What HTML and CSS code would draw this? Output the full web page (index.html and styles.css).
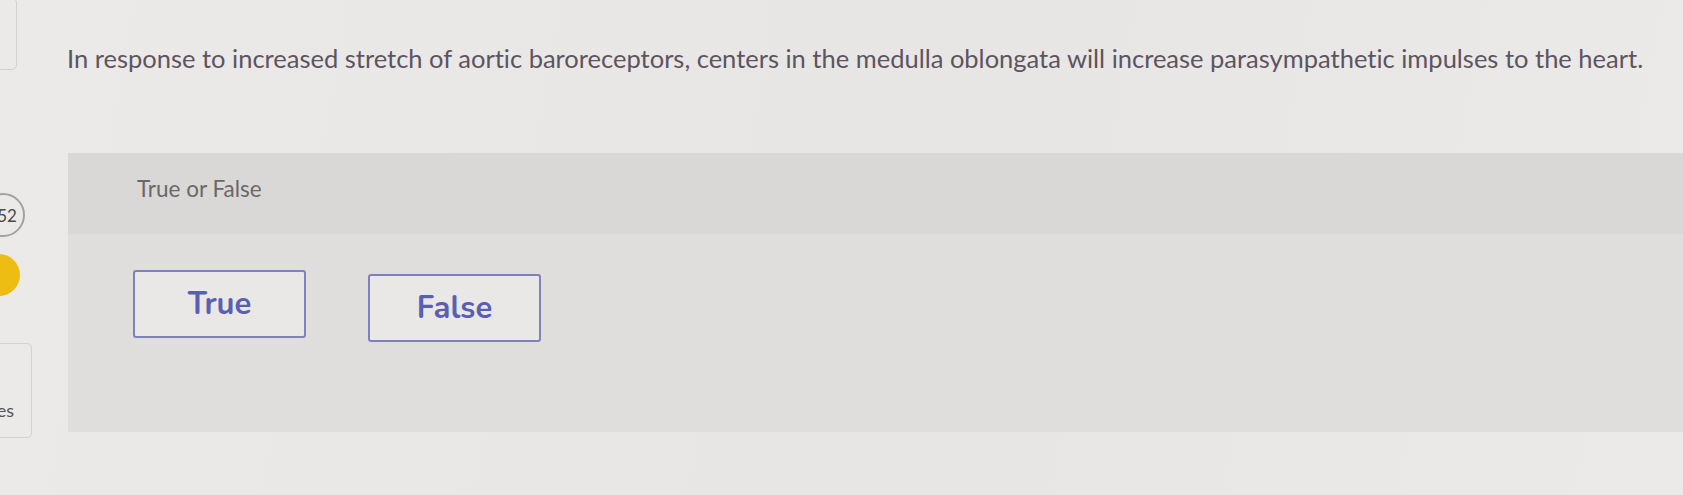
FILE: index.html
```html
<!DOCTYPE html>
<html lang="en">
<head>
    <meta charset="UTF-8">
    <meta name="viewport" content="width=device-width, initial-scale=1.0">
    <title>True or False</title>
    <link rel="stylesheet" href="styles.css">
</head>
<body>
    <div class="page">
        <!-- Question navigator (mostly scrolled off) -->
        <aside class="rail">
            <div class="rail-card rail-card-top"></div>
            <div class="rail-badge">52</div>
            <div class="rail-dot"></div>
            <div class="rail-card rail-card-bottom"><span>es</span></div>
        </aside>

        <!-- Question -->
        <main class="question">
            <p class="prompt">In response to increased stretch of aortic baroreceptors, centers in the medulla oblongata will increase parasympathetic impulses to the heart.</p>

            <section class="answer-panel">
                <div class="panel-head">True or False</div>
                <div class="choices">
                    <button class="choice">True</button>
                    <button class="choice choice-false">False</button>
                </div>
            </section>
        </main>
    </div>
</body>
</html>
```

FILE: styles.css
```css
/* General Styling */
* {
    margin: 0;
    padding: 0;
    box-sizing: border-box;
}

html, body {
    height: 100%;
    overflow: hidden;
}

body {
    background: linear-gradient(100deg, #ebeae8 0%, #e7e6e4 55%, #ebeae8 100%);
    font-family: Lato, "Open Sans", Arial, sans-serif;
    font-variant-ligatures: none;
    color: #5d5461;
}

.page {
    display: flex;
    height: 100%;
}

/* Left rail */
.rail {
    width: 33px;
    flex-shrink: 0;
    display: flex;
    flex-direction: column;
    align-items: flex-end;
}

.rail-card {
    border: 1px solid #d3d2d0;
    border-radius: 5px;
    background: #ebeae8;
}

.rail-card-top {
    width: 70px;
    height: 72px;
    margin-top: -2px;
    margin-right: 16px;
}

.rail-badge {
    width: 44px;
    height: 44px;
    margin-top: 123px;
    margin-right: 8px;
    padding-left: 8px;
    border: 2px solid #a3a2a0;
    border-radius: 50%;
    display: flex;
    align-items: center;
    justify-content: center;
    font-size: 17px;
    color: #4a4a4a;
}

.rail-dot {
    width: 42px;
    height: 42px;
    margin-top: 17px;
    margin-right: 13px;
    border-radius: 50%;
    background: #eebd14;
}

.rail-card-bottom {
    width: 70px;
    height: 95px;
    margin-top: 47px;
    margin-right: 1px;
    display: flex;
    align-items: flex-end;
    justify-content: flex-end;
    padding: 0 17px 16px 0;
    font-size: 18px;
    color: #555;
}

/* Question */
.question {
    flex: 1;
    padding-left: 34px;
    min-width: 0;
}

.prompt {
    margin-top: 42px;
    font-size: 25.5px;
    line-height: 32px;
    white-space: nowrap;
}

.answer-panel {
    margin-top: 79px;
    margin-left: 1px;
    background: #dfdedc;
}

.panel-head {
    height: 81px;
    padding: 22px 0 0 69px;
    background: #d9d8d6;
    font-size: 22.5px;
    line-height: 28px;
    color: #6a6869;
}

.choices {
    display: flex;
    gap: 62px;
    padding: 36px 0 90px 65px;
}

.choice {
    width: 173px;
    height: 68px;
    border: 2px solid #7f80bd;
    border-radius: 3px;
    background: #e9e8e6;
    font-family: "Nunito", Lato, "DejaVu Sans", sans-serif;
    font-weight: 700;
    font-size: 31px;
    color: #5a5fb3;
}

.choice-false {
    margin-top: 4px;
}
```
